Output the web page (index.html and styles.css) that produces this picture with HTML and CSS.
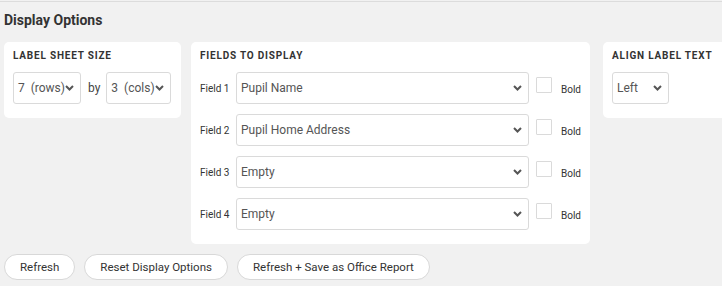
FILE: index.html
```html
<html>
    <head>
        <title>Display Options</title>
        <link rel="stylesheet" href="styles.css">
    </head>
    <body>
        <div class="page">
            <h2 class="title">Display Options</h2>

            <div class="cards">
                <div class="card size_card">
                    <div class="card_head">Label Sheet Size</div>
                    <div class="row">
                        <div class="select sel_rows"><span>7 &nbsp;(rows)</span><svg class="chev" width="9" height="6" viewBox="0 0 9 6"><path d="M1 1 L4.5 4.5 L8 1" fill="none" stroke="#555" stroke-width="2"/></svg></div>
                        <span class="by">by</span>
                        <div class="select sel_cols"><span>3 &nbsp;(cols)</span><svg class="chev" width="9" height="6" viewBox="0 0 9 6"><path d="M1 1 L4.5 4.5 L8 1" fill="none" stroke="#555" stroke-width="2"/></svg></div>
                    </div>
                </div>

                <div class="card fields_card">
                    <div class="card_head">Fields to Display</div>
                    <div class="field_row">
                        <span class="field_label">Field 1</span>
                        <div class="select sel_field"><span>Pupil Name</span><svg class="chev" width="9" height="6" viewBox="0 0 9 6"><path d="M1 1 L4.5 4.5 L8 1" fill="none" stroke="#555" stroke-width="2"/></svg></div>
                        <span class="check"></span>
                        <span class="bold_label">Bold</span>
                    </div>
                    <div class="field_row">
                        <span class="field_label">Field 2</span>
                        <div class="select sel_field"><span>Pupil Home Address</span><svg class="chev" width="9" height="6" viewBox="0 0 9 6"><path d="M1 1 L4.5 4.5 L8 1" fill="none" stroke="#555" stroke-width="2"/></svg></div>
                        <span class="check"></span>
                        <span class="bold_label">Bold</span>
                    </div>
                    <div class="field_row">
                        <span class="field_label">Field 3</span>
                        <div class="select sel_field"><span>Empty</span><svg class="chev" width="9" height="6" viewBox="0 0 9 6"><path d="M1 1 L4.5 4.5 L8 1" fill="none" stroke="#555" stroke-width="2"/></svg></div>
                        <span class="check"></span>
                        <span class="bold_label">Bold</span>
                    </div>
                    <div class="field_row">
                        <span class="field_label">Field 4</span>
                        <div class="select sel_field"><span>Empty</span><svg class="chev" width="9" height="6" viewBox="0 0 9 6"><path d="M1 1 L4.5 4.5 L8 1" fill="none" stroke="#555" stroke-width="2"/></svg></div>
                        <span class="check"></span>
                        <span class="bold_label">Bold</span>
                    </div>
                </div>

                <div class="card align_card">
                    <div class="card_head">Align Label Text</div>
                    <div class="row">
                        <div class="select sel_align"><span>Left</span><svg class="chev" width="9" height="6" viewBox="0 0 9 6"><path d="M1 1 L4.5 4.5 L8 1" fill="none" stroke="#555" stroke-width="2"/></svg></div>
                    </div>
                </div>
            </div>

            <div class="buttons">
                <button class="btn">Refresh</button>
                <button class="btn">Reset Display Options</button>
                <button class="btn">Refresh + Save as Office Report</button>
            </div>
        </div>
    </body>
</html>
```

FILE: styles.css
```css
html{
    overflow: hidden;
}
body{
    margin: 0;
    background: #f1f1f1;
    font-family: Roboto, "Liberation Sans", sans-serif;
    color: #333;
}
.page{
    border-top: 1px solid #dcdcdc;
    margin-top: 1px;
    padding: 0 4px;
}
.title{
    margin: 0;
    padding-top: 9px;
    height: 31px;
    font-size: 14px;
    font-weight: bold;
    color: #333;
    line-height: 18px;
}
.cards{
    display: flex;
    align-items: flex-start;
}
.card{
    flex-shrink: 0;
    background: #fff;
    border-radius: 5px;
    padding: 8px 9px 0 9px;
    box-sizing: border-box;
}
.card_head{
    font-size: 10px;
    font-weight: bold;
    letter-spacing: 0.8px;
    text-transform: uppercase;
    color: #333;
    line-height: 12px;
    height: 22px;
    white-space: nowrap;
}
.row{
    display: flex;
    align-items: center;
}
.size_card{
    width: 177px;
    height: 76px;
}
.fields_card{
    width: 399px;
    height: 202px;
    margin-left: 10px;
}
.align_card{
    width: 140px;
    height: 76px;
    margin-left: 13px;
}
.select{
    display: flex;
    align-items: center;
    justify-content: space-between;
    height: 32px;
    box-sizing: border-box;
    border: 1px solid #dadada;
    border-radius: 3px;
    padding: 0 6px 0 4px;
    font-size: 12px;
    color: #555;
    background: #fff;
    white-space: nowrap;
}
.chev{
    flex-shrink: 0;
}
.sel_rows{
    width: 68px;
}
.sel_cols{
    width: 65px;
}
.sel_align{
    width: 57px;
}
.by{
    font-size: 12px;
    color: #444;
    margin: 0 6px 0 7px;
}
.field_row{
    display: flex;
    align-items: center;
    margin-bottom: 10px;
}
.field_label{
    font-size: 10px;
    color: #333;
    width: 36px;
}
.sel_field{
    width: 293px;
}
.check{
    width: 16px;
    height: 16px;
    box-sizing: border-box;
    border: 1px solid #dadada;
    border-radius: 1px;
    margin: -7px 0 0 7px;
}
.bold_label{
    font-size: 10px;
    color: #333;
    margin: 3px 0 0 9px;
}
.buttons{
    display: flex;
    gap: 9px;
    margin-top: 10px;
}
.btn{
    font-family: Roboto, "Liberation Sans", sans-serif;
    font-size: 11.5px;
    color: #333;
    background: #fff;
    border: 1px solid #d8d8d8;
    border-radius: 13px;
    height: 26px;
    padding: 0 15px;
    cursor: pointer;
}
```
